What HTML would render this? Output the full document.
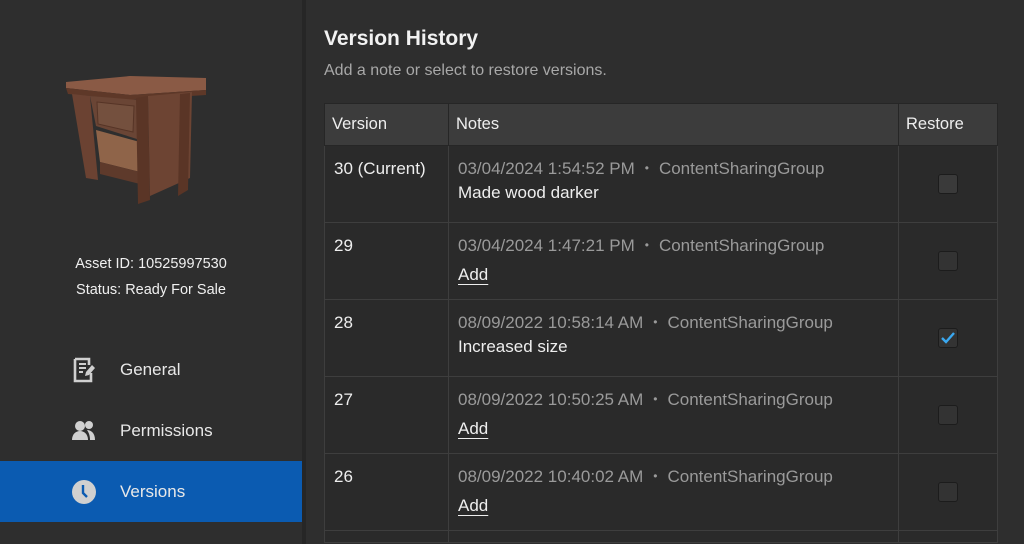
<!DOCTYPE html>
<html><head><meta charset="utf-8"><style>
*{margin:0;padding:0;box-sizing:border-box}
html,body{width:1024px;height:544px;overflow:hidden}
body{background:#2e2e2e;font-family:"Liberation Sans",sans-serif;color:#e8e8e8;position:relative}
.side{position:absolute;left:0;top:0;width:302px;height:544px;background:#2e2e2e}
.div{position:absolute;left:302px;top:0;width:4px;height:544px;background:#262626}
.info{position:absolute;left:0;width:302px;text-align:center;font-size:14.5px;color:#f0f0f0}
.nav{position:absolute;left:0;width:302px;height:61px;font-size:17px;color:#e8e8e8}
.nav span{position:absolute;left:120px;top:21px}
.nav svg{position:absolute;left:71px;top:18px}
.sel{background:#0b5bb1}
h1{position:absolute;left:324px;top:27px;font-size:21px;font-weight:bold;color:#f2f2f2}
.sub{position:absolute;left:324px;top:62px;font-size:16px;color:#a8a8a8}
.tw{position:absolute;left:324px;top:103px;width:674px;height:441px;overflow:hidden}
table{width:674px;border-collapse:collapse;font-size:17px}
th{background:#3c3c3c;text-align:left;font-weight:normal;font-size:16.5px;height:42px;padding:0 7px;border:1px solid #262626;color:#eee}
td{height:77px;border:1px solid #3e3e3e;background:#2a2a2a;vertical-align:top;padding:13px 9px;color:#eee}
tr.last td{height:12px;padding:0}
.meta{color:#9a9a9a;font-size:17px}
.dot{margin:0 10px;font-size:12px;position:relative;top:-2px}
.note{margin-top:4px;font-size:17px}
.add{margin-top:9px;text-decoration:underline;text-underline-offset:4px;font-size:17px}
td.r{text-align:center;vertical-align:middle}
.cb{display:inline-block;width:20px;height:20px;border:1px solid #1c1c1c;border-radius:3px;background:#333;position:relative;top:2px}
</style></head><body>
<div class="side">
<svg style="position:absolute;left:0;top:0" width="302" height="230" viewBox="0 0 302 230">
<polygon points="66,82 130,76 206,78 206,90 130,95 66,88" fill="#8a5a45"/>
<polygon points="66,88 130,95 206,90 206,95 130,100 68,94" fill="#5e3828"/>
<polygon points="72,94 90,96 98,180 86,178" fill="#6b4232"/>
<polygon points="90,96 138,100 140,140 96,126" fill="#6a4535"/>
<polygon points="97,102 134,106 133,132 98,124" fill="#74503e" stroke="#563426"/>
<polygon points="96,130 140,142 140,172 100,162" fill="#8f6449"/>
<polygon points="100,162 140,172 140,184 100,174" fill="#5e3a2b"/>
<polygon points="136,98 148,96 150,200 138,204" fill="#5a3526"/>
<polygon points="148,96 192,92 190,178 150,196" fill="#6d4433"/>
<polygon points="180,94 190,93 188,190 178,196" fill="#5a3526"/>
</svg>
<div class="info" style="top:256px">Asset ID: 10525997530</div>
<div class="info" style="top:282px">Status: Ready For Sale</div>
<div class="nav" style="top:339px"><svg width="26" height="26" viewBox="0 0 26 26"><path d="M4 2h14v6M4 2v22h16v-8" fill="none" stroke="#d0d0d0" stroke-width="2.6"/><path d="M8 7h7M8 11h7M8 15h4" stroke="#d0d0d0" stroke-width="2"/><path d="M14 19l1-4 6-7 3 3-6 7z" fill="#d0d0d0"/></svg><span>General</span></div>
<div class="nav" style="top:400px"><svg width="26" height="26" viewBox="0 0 26 26"><circle cx="9" cy="8" r="5" fill="#d0d0d0"/><circle cx="18" cy="7" r="4" fill="#d0d0d0"/><path d="M1 22c0-6 4-9 8-9s8 3 8 9z" fill="#d0d0d0"/><path d="M16 12c4 0 8 3 8 10h-5c0-4-1-7-3-10z" fill="#d0d0d0"/></svg><span>Permissions</span></div>
<div class="nav sel" style="top:461px"><svg width="26" height="26" viewBox="0 0 26 26"><circle cx="13" cy="13" r="12" fill="#d0d0d0"/><path d="M12 6v8l4 4" fill="none" stroke="#0b5bb1" stroke-width="2.4"/></svg><span>Versions</span></div>
</div>
<div class="div"></div>
<h1>Version History</h1>
<div class="sub">Add a note or select to restore versions.</div>
<div class="tw">
<table>
<tr><th style="width:124px">Version</th><th>Notes</th><th style="width:99px">Restore</th></tr>
<tr><td>30 (Current)</td><td><div class="meta">03/04/2024 1:54:52 PM<span class="dot">•</span>ContentSharingGroup</div><div class="note">Made wood darker</div></td><td class="r"><span class="cb" style="background:#3a3a3a"></span></td></tr>
<tr><td>29</td><td><div class="meta">03/04/2024 1:47:21 PM<span class="dot">•</span>ContentSharingGroup</div><div class="add">Add</div></td><td class="r"><span class="cb"></span></td></tr>
<tr><td>28</td><td><div class="meta">08/09/2022 10:58:14 AM<span class="dot">•</span>ContentSharingGroup</div><div class="note">Increased size</div></td><td class="r"><span class="cb"><svg width="18" height="18" viewBox="0 0 18 18" style="position:absolute;left:0;top:0"><path d="M3 9l4 4 8-9" fill="none" stroke="#3aa8f0" stroke-width="2.4"/></svg></span></td></tr>
<tr><td>27</td><td><div class="meta">08/09/2022 10:50:25 AM<span class="dot">•</span>ContentSharingGroup</div><div class="add">Add</div></td><td class="r"><span class="cb"></span></td></tr>
<tr><td>26</td><td><div class="meta">08/09/2022 10:40:02 AM<span class="dot">•</span>ContentSharingGroup</div><div class="add">Add</div></td><td class="r"><span class="cb"></span></td></tr>
<tr class="last"><td></td><td></td><td></td></tr>
</table>
</div>
</body></html>
